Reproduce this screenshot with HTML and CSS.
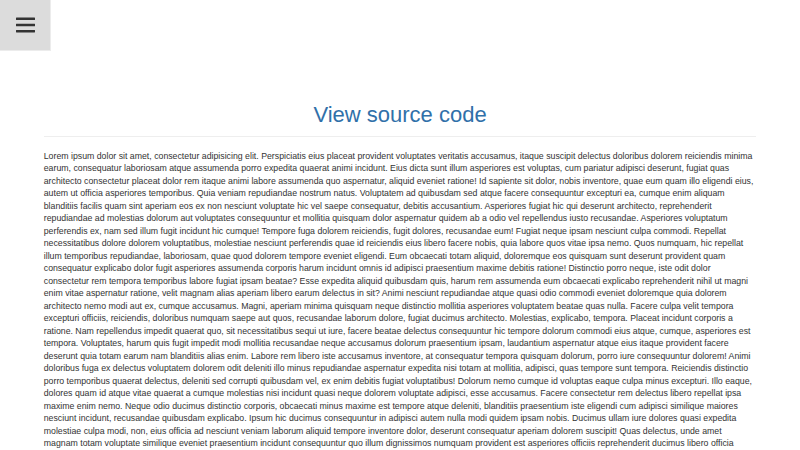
FILE: index.html
```html
<!DOCTYPE html>
<html lang="en">
<head>
<meta charset="utf-8">
<title>View source code</title>
<link rel="stylesheet" href="styles.css">
</head>
<body>
<header class="topbar">
  <button class="menu-toggle" type="button" aria-label="Menu">
    <svg class="menu-icon" viewBox="0 0 19 16" width="19" height="16" aria-hidden="true">
      <rect x="0" y="0.5" width="19" height="2.6" rx="0.4"/>
      <rect x="0" y="6.7" width="19" height="2.6" rx="0.4"/>
      <rect x="0" y="12.9" width="19" height="2.6" rx="0.4"/>
    </svg>
  </button>
</header>
<main class="container">
  <h1 class="page-title"><a href="#">View source code</a></h1>
  <hr class="divider">
  <p class="lead-text">Lorem ipsum dolor sit amet, consectetur adipisicing elit. Perspiciatis eius placeat provident voluptates veritatis accusamus, itaque suscipit delectus doloribus dolorem reiciendis minima earum, consequatur laboriosam atque assumenda porro expedita quaerat animi incidunt. Eius dicta sunt illum asperiores est voluptas, cum pariatur adipisci deserunt, fugiat quas architecto consectetur placeat dolor rem itaque animi labore assumenda quo aspernatur, aliquid eveniet ratione! Id sapiente sit dolor, nobis inventore, quae eum quam illo eligendi eius, autem ut officia asperiores temporibus. Quia veniam repudiandae nostrum natus. Voluptatem ad quibusdam sed atque facere consequuntur excepturi ea, cumque enim aliquam blanditiis facilis quam sint aperiam eos ex non nesciunt voluptate hic vel saepe consequatur, debitis accusantium. Asperiores fugiat hic qui deserunt architecto, reprehenderit repudiandae ad molestias dolorum aut voluptates consequuntur et mollitia quisquam dolor aspernatur quidem ab a odio vel repellendus iusto recusandae. Asperiores voluptatum perferendis ex, nam sed illum fugit incidunt hic cumque! Tempore fuga dolorem reiciendis, fugit dolores, recusandae eum! Fugiat neque ipsam nesciunt culpa commodi. Repellat necessitatibus dolore dolorem voluptatibus, molestiae nesciunt perferendis quae id reiciendis eius libero facere nobis, quia labore quos vitae ipsa nemo. Quos numquam, hic repellat illum temporibus repudiandae, laboriosam, quae quod dolorem tempore eveniet eligendi. Eum obcaecati totam aliquid, doloremque eos quisquam sunt deserunt provident quam consequatur explicabo dolor fugit asperiores assumenda corporis harum incidunt omnis id adipisci praesentium maxime debitis ratione! Distinctio porro neque, iste odit dolor consectetur rem tempora temporibus labore fugiat ipsam beatae? Esse expedita aliquid quibusdam quis, harum rem assumenda eum obcaecati explicabo reprehenderit nihil ut magni enim vitae aspernatur ratione, velit magnam alias aperiam libero earum delectus in sit? Animi nesciunt repudiandae atque quasi odio commodi eveniet doloremque quia dolorem architecto nemo modi aut ex, cumque accusamus. Magni, aperiam minima quisquam neque distinctio mollitia asperiores voluptatem beatae quas nulla. Facere culpa velit tempora excepturi officiis, reiciendis, doloribus numquam saepe aut quos, recusandae laborum dolore, fugiat ducimus architecto. Molestias, explicabo, tempora. Placeat incidunt corporis a ratione. Nam repellendus impedit quaerat quo, sit necessitatibus sequi ut iure, facere beatae delectus consequuntur hic tempore dolorum commodi eius atque, cumque, asperiores est tempora. Voluptates, harum quis fugit impedit modi mollitia recusandae neque accusamus dolorum praesentium ipsam, laudantium aspernatur atque eius itaque provident facere deserunt quia totam earum nam blanditiis alias enim. Labore rem libero iste accusamus inventore, at consequatur tempora quisquam dolorum, porro iure consequuntur dolorem! Animi doloribus fuga ex delectus voluptatem dolorem odit deleniti illo minus repudiandae aspernatur expedita nisi totam at mollitia, adipisci, quas tempore sunt tempora. Reiciendis distinctio porro temporibus quaerat delectus, deleniti sed corrupti quibusdam vel, ex enim debitis fugiat voluptatibus! Dolorum nemo cumque id voluptas eaque culpa minus excepturi. Illo eaque, dolores quam id atque vitae quaerat a cumque molestias nisi incidunt quasi neque dolorem voluptate adipisci, esse accusamus. Facere consectetur rem delectus libero repellat ipsa maxime enim nemo. Neque odio ducimus distinctio corporis, obcaecati minus maxime est tempore atque deleniti, blanditiis praesentium iste eligendi cum adipisci similique maiores nesciunt incidunt, recusandae quibusdam explicabo. Ipsum hic ducimus consequuntur in adipisci autem nulla modi quidem ipsam nobis. Ducimus ullam iure dolores quasi expedita molestiae culpa modi, non, eius officia ad nesciunt veniam laborum aliquid tempore inventore dolor, deserunt consequatur aperiam dolorem suscipit! Quas delectus, unde amet magnam totam voluptate similique eveniet praesentium incidunt consequuntur quo illum dignissimos numquam provident est asperiores officiis reprehenderit ducimus libero officia</p>
</main>
</body>
</html>
```

FILE: styles.css
```css
html, body {
  margin: 0;
  padding: 0;
  background: #ffffff;
}

body {
  font-family: "Liberation Sans", Arial, Helvetica, sans-serif;
  font-size: 8.75px;
  line-height: 12.5px;
  color: #333333;
}

.topbar {
  display: flex;
  height: 51px;
}

.menu-toggle {
  display: flex;
  align-items: center;
  justify-content: center;
  width: 51px;
  height: 51px;
  margin: 0;
  padding: 0 0 1px 0;
  border: 0;
  border-right: 1px solid #ececec;
  border-bottom: 1px solid #ececec;
  background: #dcdcdc;
  cursor: pointer;
}

.menu-icon {
  display: block;
  fill: #333333;
}

.container {
  width: 712.5px;
  margin: 0 auto;
}

.page-title {
  margin: 52px 0 0;
  font-size: 22px;
  line-height: 24.75px;
  font-weight: 500;
  text-align: center;
}

.page-title a {
  color: #3070a9;
  text-decoration: none;
}

.divider {
  margin: 8px 0 13px;
  border: 0;
  border-top: 1px solid #eeeeee;
  height: 0;
}

.lead-text {
  margin: 0;
}
```
